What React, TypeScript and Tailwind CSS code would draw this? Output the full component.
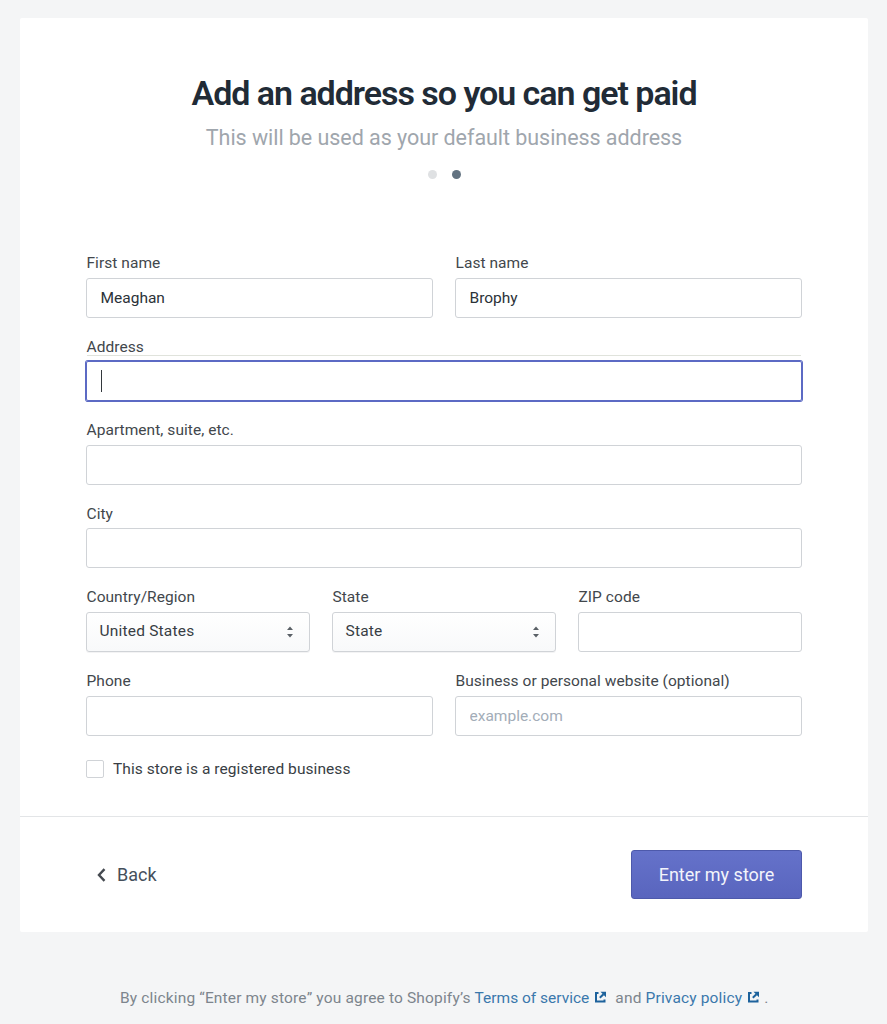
import type { ReactNode } from "react";

const inputClass =
  "block h-10 w-full rounded-[3px] border border-[#d0d3d7] bg-white px-[13.5px] text-[15.5px] text-[#2b3238] outline-none placeholder:text-[#a3adb8]";

function Field({ label, children }: { label: string; children: ReactNode }) {
  return (
    <label className="block min-w-0">
      <span className="block h-[25.6px] pl-[0.5px] text-[15.5px] leading-[22px] tracking-[0.05px] whitespace-nowrap text-[#42474c]">
        {label}
      </span>
      {children}
    </label>
  );
}

function SelectBox({ value }: { value: string }) {
  return (
    <button
      type="button"
      className="flex h-10 w-full items-center justify-between rounded-[3px] border border-[#d0d3d7] bg-linear-to-b from-white to-[#f8f9fa] pr-[15px] pl-[12.5px] text-[15.5px] tracking-[0.2px] text-[#383e44] shadow-[0_1px_0_rgba(22,29,37,0.05)]"
    >
      {value}
      <svg width="8" height="12" viewBox="0 0 8 12" fill="#5a6066">
        <path d="M4 0.5 7 4H1z" />
        <path d="M4 11.5 1 8h6z" />
      </svg>
    </button>
  );
}

function ExternalIcon() {
  return (
    <svg width="13" height="13" viewBox="0 0 13 13" fill="none" stroke="#1d629c" strokeWidth="2" className="ml-[5px] inline-block align-[-1px]">
      <path d="M4.5 2H2v8.5h8.5V8.5" />
      <path d="M5.8 6.8 9.5 3.2" />
      <path d="M6.5 0.8H12v5.5z" fill="#1d629c" stroke="none" />
    </svg>
  );
}

export default function App() {
  return (
    <div className="h-[1024px] w-[887px] overflow-hidden bg-[#f4f5f6] px-5 pt-[18px] font-['Roboto','Liberation_Sans',sans-serif]">
      <main className="h-[914px] w-[848px] rounded-[2px] bg-white">
        <header className="flex h-[234px] flex-col items-center pt-[53px]">
          <h1 className="text-[34px] leading-[44px] font-semibold tracking-[-1.03px] whitespace-nowrap text-[#212b36]">
            Add an address so you can get paid
          </h1>
          <p className="text-[21.5px] leading-[45px] tracking-[-0.05px] whitespace-nowrap text-[#9fa6ad]">
            This will be used as your default business address
          </p>
          <div className="mt-[9.5px] flex gap-[15px]">
            <span className="size-[9px] rounded-full bg-[#dfe1e3]" />
            <span className="size-[9px] rounded-full bg-[#637381]" />
          </div>
        </header>

        <form className="flex h-[564px] flex-col gap-[18px] px-[66px]">
          <div className="grid grid-cols-2 gap-[22px]">
            <Field label="First name">
              <input className={inputClass} defaultValue="Meaghan" />
            </Field>
            <Field label="Last name">
              <input className={inputClass} defaultValue="Brophy" />
            </Field>
          </div>
          <Field label="Address">
            <div className="relative flex h-10 items-center rounded-[2px] border border-[#5c6ac4] px-[14px] ring-1 ring-[#5c6ac4]">
              <span className="absolute inset-x-0 -top-[7px] h-px bg-[#e0e3dc]" />
              <span className="h-[22px] w-px bg-[#33383d]" />
            </div>
          </Field>
          <Field label="Apartment, suite, etc.">
            <input className={inputClass} />
          </Field>
          <Field label="City">
            <input className={inputClass} />
          </Field>
          <div className="grid grid-cols-3 gap-[22px]">
            <Field label="Country/Region">
              <SelectBox value="United States" />
            </Field>
            <Field label="State">
              <SelectBox value="State" />
            </Field>
            <Field label="ZIP code">
              <input className={inputClass} />
            </Field>
          </div>
          <div className="grid grid-cols-2 gap-[22px]">
            <Field label="Phone">
              <input className={inputClass} />
            </Field>
            <Field label="Business or personal website (optional)">
              <input className={inputClass} placeholder="example.com" />
            </Field>
          </div>
          <label className="mt-[5px] flex items-center gap-[9px] text-[15.5px] leading-5 tracking-[0.07px] text-[#383e44]">
            <span className="size-[18px] rounded-[2px] border border-[#d0d3d7]" />
            This store is a registered business
          </label>
        </form>

        <footer className="flex h-[116px] items-center justify-between border-t border-[#e3e5e7] px-[66px]">
          <button type="button" className="flex items-center pl-[10.5px] text-lg tracking-[0.05px] text-[#454f5b]">
            <svg width="9" height="14" viewBox="0 0 9 14" fill="none" stroke="#454a50" strokeWidth="2.4" className="mr-[11.5px]">
              <path d="M7.5 1.2 2 7l5.5 5.8" />
            </svg>
            Back
          </button>
          <button
            type="button"
            className="h-[49px] w-[171px] rounded-[3px] border border-[#4d59ab] bg-linear-to-b from-[#6572ca] to-[#5965be] text-lg text-[#f3f4fb]"
          >
            Enter my store
          </button>
        </footer>
      </main>

      <p className="mt-14 pl-[100px] text-[15.5px] leading-5 tracking-[0.16px] whitespace-nowrap text-[#7d858d]">
        By clicking “Enter my store” you agree to Shopify’s{" "}
        <a className="tracking-normal text-[#3a78ac]">Terms of service<ExternalIcon /></a>
        <span className="ml-1"> and </span>
        <a className="text-[#3a78ac]">Privacy policy<ExternalIcon /></a>
        <span> .</span>
      </p>
    </div>
  );
}
